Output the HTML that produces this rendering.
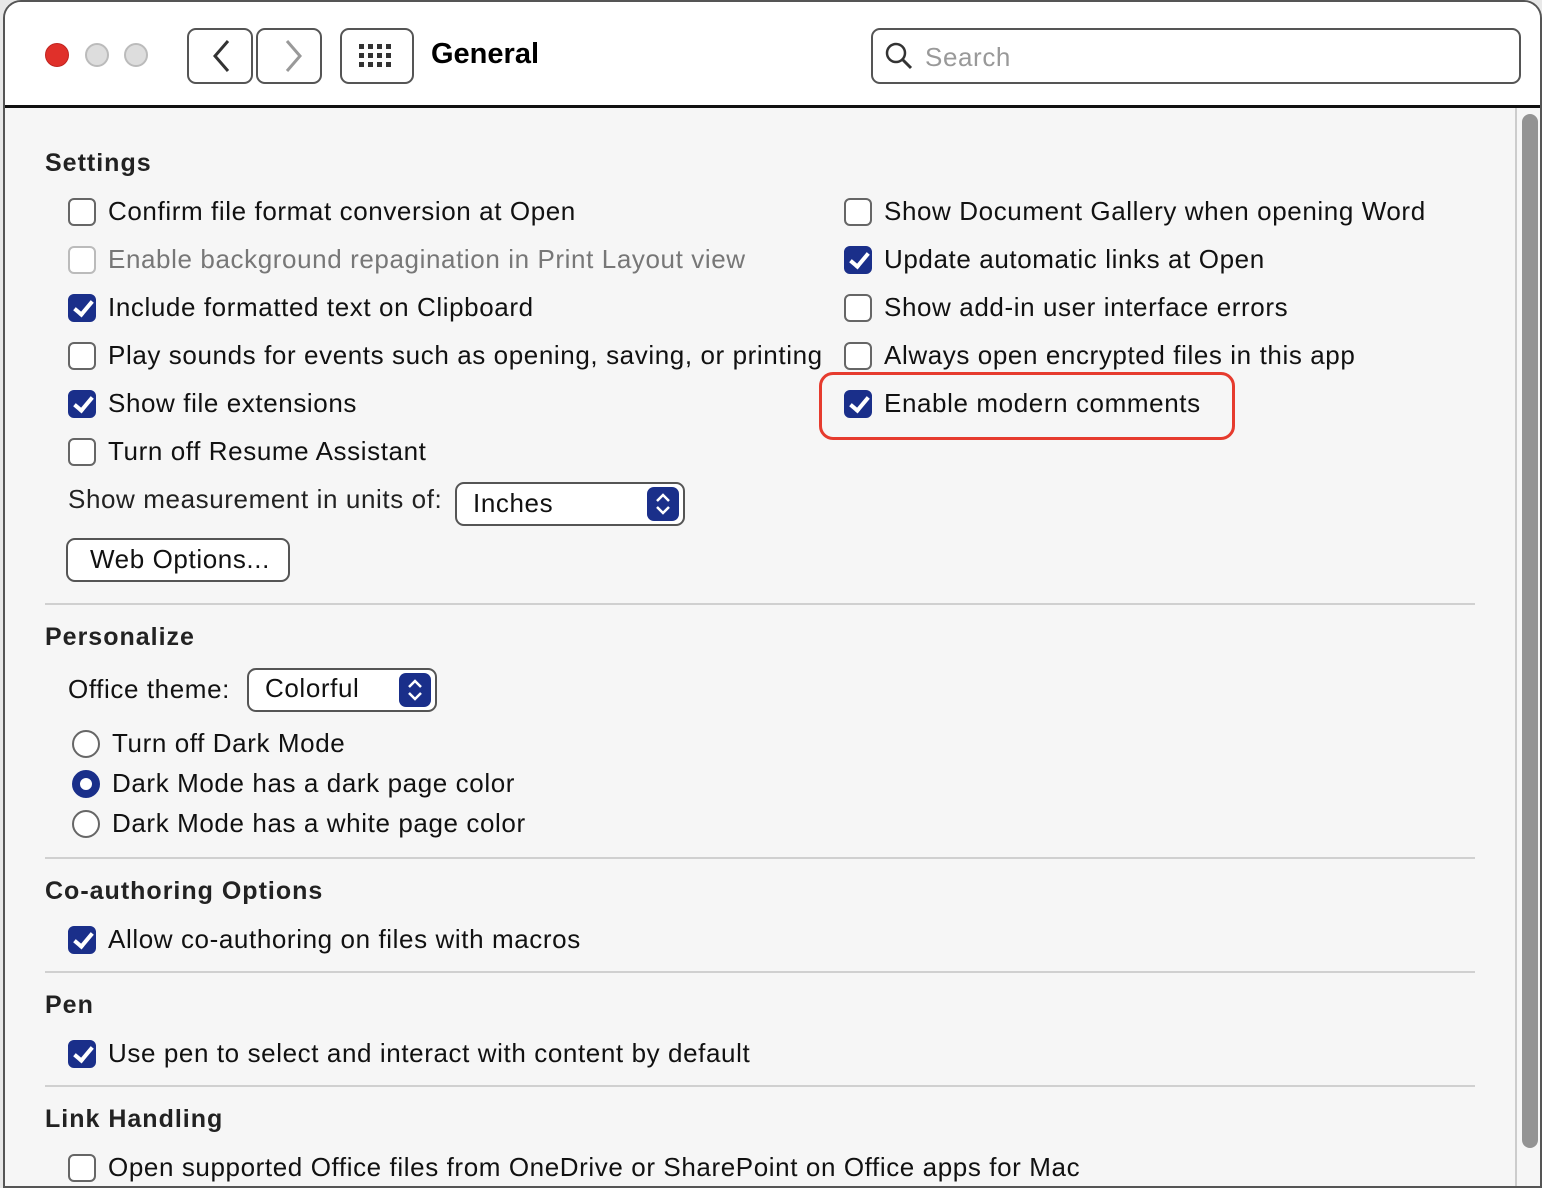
<!DOCTYPE html>
<html><head><style>
*{margin:0;padding:0;box-sizing:border-box}
body{width:1542px;height:1188px;background:#e8e8e8;font-family:"Liberation Sans",sans-serif;position:relative;overflow:hidden}
.win{position:absolute;left:3px;top:0;width:1539px;height:1188px;background:#f6f6f6;border:2px solid #555;border-radius:18px 18px 0 0;overflow:hidden}
.title{position:absolute;left:0;top:0;right:0;height:106px;background:#fff;border-bottom:3px solid #111}
.a{position:absolute;white-space:nowrap}
.t{font-size:26px;letter-spacing:0.6px;color:#111;margin-top:-2px}
.h{font-size:25px;font-weight:bold;color:#222;letter-spacing:1px}
.cb{position:absolute;width:28px;height:28px;border:2.5px solid #666;border-radius:6px;background:#fff}
.cb.on{background:#1a2f8a;border-color:#1a2f8a}
.cb.on:after{content:"";position:absolute;left:8px;top:1px;width:7px;height:15px;border:solid #fff;border-width:0 4px 4px 0;transform:rotate(40deg)}
.cb.dis{border-color:#bbb}
.rb{position:absolute;width:28px;height:28px;border:2.5px solid #666;border-radius:50%;background:#fff}
.rb.on{border:8px solid #1a2f8a}
.hr{position:absolute;left:40px;width:1430px;height:2px;background:#d0d0d0}
.btn{position:absolute;border:2px solid #555;border-radius:9px;background:#fff}
.sel{position:absolute;border:2.5px solid #555;border-radius:9px;background:#fff}
.arr{position:absolute;right:4px;top:3px;width:32px;height:34px;background:#1a2f8a;border-radius:7px}
</style></head><body>
<div class="win">
<div class="title">
 <div class="a" style="left:40px;top:41px;width:24px;height:24px;border-radius:50%;background:#e0302a;border:1px solid #c02420"></div>
 <div class="a" style="left:80px;top:41px;width:24px;height:24px;border-radius:50%;background:#ddd;border:2px solid #bbb"></div>
 <div class="a" style="left:119px;top:41px;width:24px;height:24px;border-radius:50%;background:#ddd;border:2px solid #bbb"></div>
 <div class="btn" style="left:182px;top:26px;width:66px;height:56px"></div>
 <div class="btn" style="left:251px;top:26px;width:66px;height:56px"></div>
 <svg class="a" style="left:182px;top:26px" width="140" height="56"><path d="M41 13 L28 28 L41 43" stroke="#333" stroke-width="3" fill="none"/><path d="M100 13 L113 28 L100 43" stroke="#999" stroke-width="3" fill="none"/></svg>
 <div class="btn" style="left:335px;top:26px;width:74px;height:56px"></div>
 <svg class="a" style="left:352px;top:40px" width="40" height="28"><g fill="#333"><rect x="2" y="2" width="5" height="5"/><rect x="11" y="2" width="5" height="5"/><rect x="20" y="2" width="5" height="5"/><rect x="29" y="2" width="5" height="5"/><rect x="2" y="11" width="5" height="5"/><rect x="11" y="11" width="5" height="5"/><rect x="20" y="11" width="5" height="5"/><rect x="29" y="11" width="5" height="5"/><rect x="2" y="20" width="5" height="5"/><rect x="11" y="20" width="5" height="5"/><rect x="20" y="20" width="5" height="5"/><rect x="29" y="20" width="5" height="5"/></g></svg>
 <div class="a" style="left:426px;top:36px;font-size:29px;font-weight:bold;color:#000">General</div>
 <div class="btn" style="left:866px;top:26px;width:650px;height:56px"></div>
 <svg class="a" style="left:878px;top:38px" width="32" height="32"><circle cx="13" cy="13" r="9" stroke="#333" stroke-width="2.5" fill="none"/><path d="M20 20 L28 28" stroke="#333" stroke-width="3"/></svg>
 <div class="a" style="left:920px;top:40px;font-size:26px;letter-spacing:0.6px;color:#999">Search</div>
</div>
<div class="a" style="left:1510px;top:106px;width:2px;height:1082px;background:#ccc"></div>
<div class="a" style="left:1517px;top:112px;width:16px;height:1034px;border-radius:8px;background:#939393"></div>

<div class="a h" style="left:40px;top:147px">Settings</div>
<div class="cb" style="left:63px;top:196px"></div><div class="a t" style="left:103px;top:196px">Confirm file format conversion at Open</div>
<div class="cb dis" style="left:63px;top:244px"></div><div class="a t" style="left:103px;top:244px;color:#777">Enable background repagination in Print Layout view</div>
<div class="cb on" style="left:63px;top:292px"></div><div class="a t" style="left:103px;top:292px">Include formatted text on Clipboard</div>
<div class="cb" style="left:63px;top:340px"></div><div class="a t" style="left:103px;top:340px">Play sounds for events such as opening, saving, or printing</div>
<div class="cb on" style="left:63px;top:388px"></div><div class="a t" style="left:103px;top:388px">Show file extensions</div>
<div class="cb" style="left:63px;top:436px"></div><div class="a t" style="left:103px;top:436px">Turn off Resume Assistant</div>

<div class="cb" style="left:839px;top:196px"></div><div class="a t" style="left:879px;top:196px">Show Document Gallery when opening Word</div>
<div class="cb on" style="left:839px;top:244px"></div><div class="a t" style="left:879px;top:244px">Update automatic links at Open</div>
<div class="cb" style="left:839px;top:292px"></div><div class="a t" style="left:879px;top:292px">Show add-in user interface errors</div>
<div class="cb" style="left:839px;top:340px"></div><div class="a t" style="left:879px;top:340px">Always open encrypted files in this app</div>
<div class="cb on" style="left:839px;top:388px"></div><div class="a t" style="left:879px;top:388px">Enable modern comments</div>
<div class="a" style="left:814px;top:370px;width:416px;height:68px;border:3.5px solid #e63b2e;border-radius:14px"></div>

<div class="a t" style="left:63px;top:484px;color:#222">Show measurement in units of:</div>
<div class="sel" style="left:450px;top:480px;width:230px;height:44px"><div class="a t" style="left:16px;top:6px">Inches</div><div class="arr"><svg width="32" height="34"><path d="M10 14 L16 8 L22 14 M10 20 L16 26 L22 20" stroke="#fff" stroke-width="2.5" fill="none"/></svg></div></div>
<div class="btn" style="left:61px;top:536px;width:224px;height:44px"><div class="a t" style="left:22px;top:6px">Web Options...</div></div>

<div class="hr" style="top:601px"></div>
<div class="a h" style="left:40px;top:621px">Personalize</div>
<div class="a t" style="left:63px;top:674px">Office theme:</div>
<div class="sel" style="left:242px;top:666px;width:190px;height:44px"><div class="a t" style="left:16px;top:5px">Colorful</div><div class="arr"><svg width="32" height="34"><path d="M10 14 L16 8 L22 14 M10 20 L16 26 L22 20" stroke="#fff" stroke-width="2.5" fill="none"/></svg></div></div>
<div class="rb" style="left:67px;top:728px"></div><div class="a t" style="left:107px;top:728px">Turn off Dark Mode</div>
<div class="rb on" style="left:67px;top:768px"></div><div class="a t" style="left:107px;top:768px">Dark Mode has a dark page color</div>
<div class="rb" style="left:67px;top:808px"></div><div class="a t" style="left:107px;top:808px">Dark Mode has a white page color</div>

<div class="hr" style="top:855px"></div>
<div class="a h" style="left:40px;top:875px">Co-authoring Options</div>
<div class="cb on" style="left:63px;top:924px"></div><div class="a t" style="left:103px;top:924px">Allow co-authoring on files with macros</div>
<div class="hr" style="top:969px"></div>
<div class="a h" style="left:40px;top:989px">Pen</div>
<div class="cb on" style="left:63px;top:1038px"></div><div class="a t" style="left:103px;top:1038px">Use pen to select and interact with content by default</div>
<div class="hr" style="top:1083px"></div>
<div class="a h" style="left:40px;top:1103px">Link Handling</div>
<div class="cb" style="left:63px;top:1152px"></div><div class="a t" style="left:103px;top:1152px">Open supported Office files from OneDrive or SharePoint on Office apps for Mac</div>
</div>
</body></html>
